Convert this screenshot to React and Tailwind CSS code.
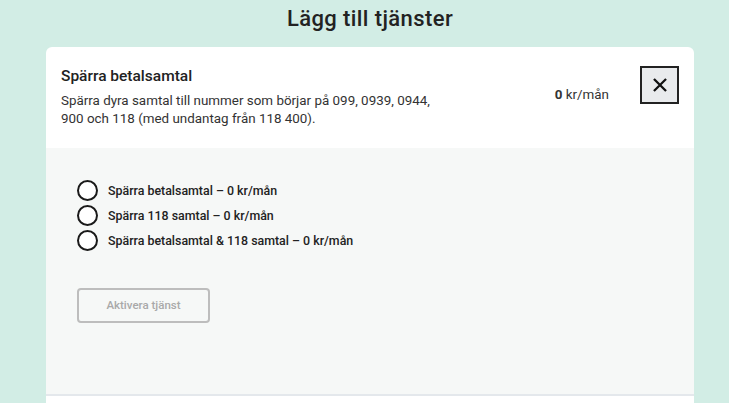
import React from "react";

const options = [
  "Spärra betalsamtal – 0 kr/mån",
  "Spärra 118 samtal – 0 kr/mån",
  "Spärra betalsamtal & 118 samtal – 0 kr/mån",
];

function CloseIcon() {
  return (
    <svg viewBox="0 0 16 16" className="w-[14px] h-[14px]" fill="none" stroke="#111" strokeWidth="2.6" strokeLinecap="square">
      <path d="M2 2 L14 14 M14 2 L2 14" />
    </svg>
  );
}

export default function App() {
  const [selected, setSelected] = React.useState(null);

  return (
    <div className="h-screen w-full overflow-hidden bg-[#d2ede5] font-['Roboto','Liberation_Sans',sans-serif] text-[#222]">
      <div className="ml-[46px] w-[648px]">
        {/* Title */}
        <h1 className="pt-[5px] h-[47px] text-center text-[22px] leading-[28px] tracking-[0.4px] font-medium text-[#222]">
          Lägg till tjänster
        </h1>

        {/* Card */}
        <div className="bg-white rounded-t-[6px] overflow-hidden">
          {/* Header */}
          <div className="flex items-start h-[101px] px-[15px] pt-[19px]">
            <div className="flex-1">
              <h2 className="text-[15.5px] leading-[20px] font-medium">Spärra betalsamtal</h2>
              <p className="mt-[6px] max-w-[385px] text-[13.4px] leading-[18px] text-[#333]">
                Spärra dyra samtal till nummer som börjar på 099, 0939, 0944, 900 och 118 (med undantag från 118 400).
              </p>
            </div>
            <div className="mt-[20px] mr-[31px] text-[13.4px] leading-[18px] text-[#333]">
              <span className="font-bold">0</span> kr/mån
            </div>
            <button className="w-[39px] h-[38px] flex items-center justify-center border-2 border-[#222] bg-[#e9ebed]">
              <CloseIcon />
            </button>
          </div>

          {/* Options */}
          <div className="bg-[#f6f8f7] pt-[32px] pb-[71px] pl-[31px] border-b-2 border-[#e4e8ec]">
            <div className="flex flex-col gap-[4px]">
              {options.map((label, i) => (
                <label key={i} className="flex items-center gap-[10px] cursor-pointer" onClick={() => setSelected(i)}>
                  <span className="w-[21px] h-[21px] rounded-full border-2 border-[#1a1a1a] bg-white flex items-center justify-center">
                    {selected === i && <span className="w-[11px] h-[11px] rounded-full bg-[#1a1a1a]" />}
                  </span>
                  <span className="text-[12.4px] leading-[16px] font-medium text-[#222]">{label}</span>
                </label>
              ))}
            </div>
            <button
              disabled={selected === null}
              className="mt-[37px] w-[133px] h-[35px] rounded-[4px] border-2 border-[#bdbdbd] text-[11.5px] text-[#a9a9a9] font-medium"
            >
              Aktivera tjänst
            </button>
          </div>
          <div className="h-[20px] bg-white" />
        </div>
      </div>
    </div>
  );
}
